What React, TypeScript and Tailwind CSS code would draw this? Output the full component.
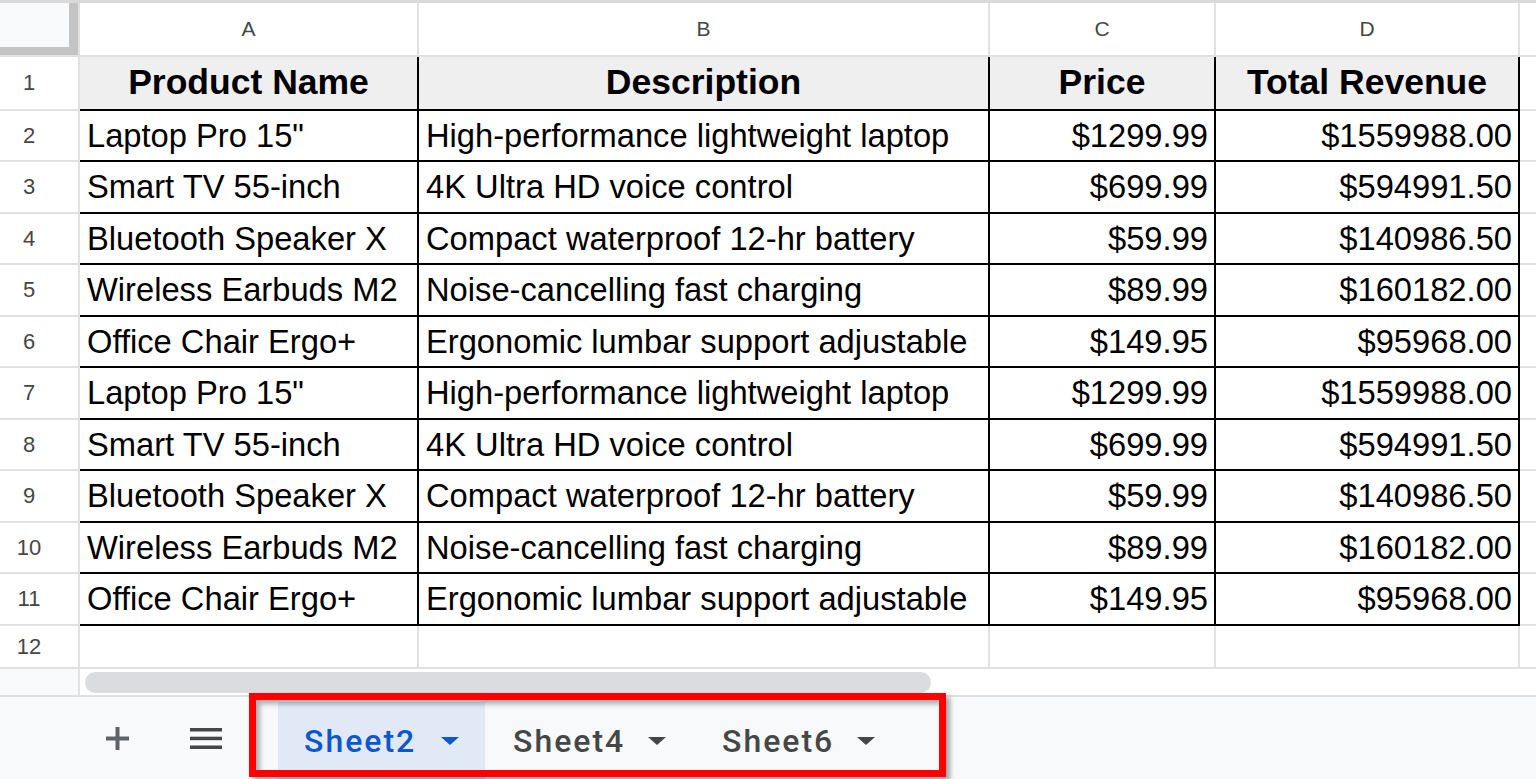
import React from 'react';

const products = [
  ['Laptop Pro 15"', 'High-performance lightweight laptop', '$1299.99', '$1559988.00'],
  ['Smart TV 55-inch', '4K Ultra HD voice control', '$699.99', '$594991.50'],
  ['Bluetooth Speaker X', 'Compact waterproof 12-hr battery', '$59.99', '$140986.50'],
  ['Wireless Earbuds M2', 'Noise-cancelling fast charging', '$89.99', '$160182.00'],
  ['Office Chair Ergo+', 'Ergonomic lumbar support adjustable', '$149.95', '$95968.00'],
];

const rows = [...products, ...products];

function RowNumber({ n }: { n: number }) {
  return (
    <div className="w-[80px] shrink-0 flex items-center justify-center pr-[20px] border-r-2 border-b-2 border-[#e1e1e1] text-[22px] text-[#444746]">
      {n}
    </div>
  );
}

function TabArrow({ color }: { color: string }) {
  return (
    <svg width="18" height="8" viewBox="0 0 18 8" className="shrink-0">
      <polygon points="0,0 18,0 9,8" fill={color} />
    </svg>
  );
}

function SheetTab({ name, active }: { name: string; active?: boolean }) {
  return (
    <div
      className={`h-[77px] flex items-center ${
        active ? 'w-[207px] pl-[26px] gap-[25px] bg-[#e1e9f7] text-[#0b57d0]' : 'w-[209px] pl-[28px] gap-[23px] text-[#444746]'
      }`}
    >
      <span className="font-['Roboto',sans-serif] font-medium text-[32px] tracking-[2px]">{name}</span>
      <TabArrow color={active ? '#0b57d0' : '#444746'} />
    </div>
  );
}

export default function App() {
  return (
    <div className="w-[1536px] h-[779px] overflow-hidden bg-white font-['Liberation_Sans',Arial,sans-serif] text-black flex flex-col">
      <div className="h-[3px] shrink-0 bg-[#dadada]" />

      {/* column letters */}
      <div className="h-[54px] shrink-0 flex">
        <div className="w-[80px] shrink-0 border-r-2 border-b-2 border-[#e1e1e1]">
          <div className="w-full h-full bg-[#f8f9fa] border-r-[9px] border-b-[8px] border-[#c4c4c4]" />
        </div>
        {['A', 'B', 'C', 'D'].map((l, i) => (
          <div
            key={l}
            className={`${['w-[339px]', 'w-[571px]', 'w-[226px]', 'w-[304px]'][i]} shrink-0 flex items-center justify-center border-r-2 border-b-2 border-[#e1e1e1] text-[21px] text-[#444746]`}
          >
            {l}
          </div>
        ))}
        <div className="flex-1 border-b-2 border-[#e1e1e1]" />
      </div>

      {/* header row */}
      <div className="h-[53.5px] shrink-0 flex">
        <RowNumber n={1} />
        <div className="w-[339px] shrink-0 flex items-center justify-center bg-[#efefef] border-r-2 border-b-2 border-black text-[35.5px] font-bold">
          Product Name
        </div>
        <div className="w-[571px] shrink-0 flex items-center justify-center bg-[#efefef] border-r-2 border-b-2 border-black text-[35.5px] font-bold">
          Description
        </div>
        <div className="w-[226px] shrink-0 flex items-center justify-center bg-[#efefef] border-r-2 border-b-2 border-black text-[35.5px] font-bold">
          Price
        </div>
        <div className="w-[304px] shrink-0 flex items-center justify-center bg-[#efefef] border-r-2 border-b-2 border-black text-[35.5px] font-bold">
          Total Revenue
        </div>
        <div className="flex-1 border-b-2 border-[#e1e1e1]" />
      </div>

      {rows.map((r, i) => (
        <div key={i} className="h-[51.5px] shrink-0 flex text-[32.7px]">
          <RowNumber n={i + 2} />
          <div className="w-[339px] shrink-0 flex items-center pl-[7px] border-r-2 border-b-2 border-black whitespace-nowrap">
            {r[0]}
          </div>
          <div className="w-[571px] shrink-0 flex items-center pl-[7px] border-r-2 border-b-2 border-black whitespace-nowrap">
            {r[1]}
          </div>
          <div className="w-[226px] shrink-0 flex items-center justify-end pr-[6px] border-r-2 border-b-2 border-black">
            {r[2]}
          </div>
          <div className="w-[304px] shrink-0 flex items-center justify-end pr-[6px] border-r-2 border-b-2 border-black">
            {r[3]}
          </div>
          <div className="flex-1 border-b-2 border-[#e1e1e1]" />
        </div>
      ))}

      {/* row 12 */}
      <div className="h-[43.5px] shrink-0 flex">
        <RowNumber n={12} />
        <div className="w-[339px] shrink-0 border-r-2 border-b-2 border-[#e1e1e1]" />
        <div className="w-[571px] shrink-0 border-r-2 border-b-2 border-[#e1e1e1]" />
        <div className="w-[226px] shrink-0 border-r-2 border-b-2 border-[#e1e1e1]" />
        <div className="w-[304px] shrink-0 border-r-2 border-b-2 border-[#e1e1e1]" />
        <div className="flex-1 border-b-2 border-[#e1e1e1]" />
      </div>

      {/* horizontal scrollbar */}
      <div className="h-[28px] shrink-0 flex border-b-2 border-[#e1e1e1]">
        <div className="w-[80px] shrink-0 bg-[#f8f9fa] border-r-2 border-[#e1e1e1]" />
        <div className="flex-1 flex items-center pl-[5px]">
          <div className="w-[846px] h-[21px] rounded-full bg-[#dadce0]" />
        </div>
      </div>

      {/* sheet bar */}
      <div className="flex-1 flex bg-[#f8f9fa]">
        <div className="w-[95px] shrink-0" />
        <div className="w-[44px] shrink-0 flex items-center justify-center">
          <svg width="23" height="23" viewBox="0 0 23 23">
            <rect x="9.5" y="0" width="4" height="23" fill="#5f6368" />
            <rect x="0" y="9.5" width="23" height="4" fill="#5f6368" />
          </svg>
        </div>
        <div className="w-[45px] shrink-0" />
        <div className="w-[44px] shrink-0 flex items-center justify-center">
          <svg width="32" height="21" viewBox="0 0 32 21">
            <rect x="0" y="0" width="32" height="3.5" fill="#444746" />
            <rect x="0" y="8.7" width="32" height="3.5" fill="#444746" />
            <rect x="0" y="17.5" width="32" height="3.5" fill="#444746" />
          </svg>
        </div>
        <div className="relative ml-[28px] mt-[3px] w-[683px] pl-[22px] pt-[2px] flex">
          <SheetTab name="Sheet2" active />
          <SheetTab name="Sheet4" />
          <SheetTab name="Sheet6" />
          <div className="absolute left-[-7px] right-[-7px] top-[-7px] bottom-[2px] border-[7px] border-[#ff0000] shadow-[4px_4px_5px_rgba(0,0,0,0.35),inset_4px_4px_5px_rgba(0,0,0,0.3)]" />
        </div>
      </div>
    </div>
  );
}
